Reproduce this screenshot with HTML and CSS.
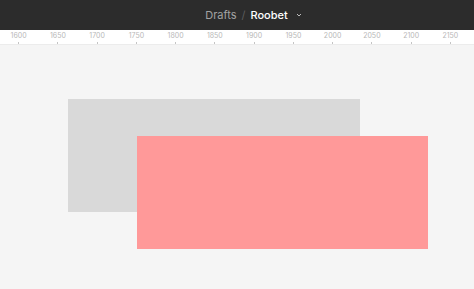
FILE: index.html
```html
<!DOCTYPE html>
<html lang="en">
<head>
    <meta charset="UTF-8">
    <meta name="viewport" content="width=device-width, initial-scale=1.0">
    <title>Roobet</title>
    <link rel="stylesheet" href="styles.css">
</head>
<body>
    <header class="topbar">
        <span class="crumb">Drafts</span>
        <span class="sep">/</span>
        <span class="file">Roobet</span>
        <svg class="chevron" width="8" height="8" viewBox="0 0 8 8">
            <path d="M2 3 L4 5 L6 3" fill="none" stroke="#bdbdbd" stroke-width="1"/>
        </svg>
    </header>

    <div class="ruler">
        <div class="mark"><span>1600</span><i></i></div>
        <div class="mark"><span>1650</span><i></i></div>
        <div class="mark"><span>1700</span><i></i></div>
        <div class="mark"><span>1750</span><i></i></div>
        <div class="mark"><span>1800</span><i></i></div>
        <div class="mark"><span>1850</span><i></i></div>
        <div class="mark"><span>1900</span><i></i></div>
        <div class="mark"><span>1950</span><i></i></div>
        <div class="mark"><span>2000</span><i></i></div>
        <div class="mark"><span>2050</span><i></i></div>
        <div class="mark"><span>2100</span><i></i></div>
        <div class="mark"><span>2150</span><i></i></div>
    </div>

    <main class="canvas">
        <div class="shape shape-gray"></div>
        <div class="shape shape-pink"></div>
    </main>
</body>
</html>
```

FILE: styles.css
```css
/* Basic reset */
* {
    margin: 0;
    padding: 0;
    box-sizing: border-box;
}

body {
    font-family: Inter, "Noto Sans", sans-serif;
    width: 474px;
    height: 289px;
    overflow: hidden;
    display: flex;
    flex-direction: column;
    background: #f5f5f5;
}

/* Dark title bar */
.topbar {
    height: 30px;
    background: #2c2c2c;
    display: flex;
    justify-content: center;
    align-items: center;
    gap: 5px;
    padding-left: 34px;
    font-size: 11px;
}

.crumb {
    color: #a3a3a3;
}

.sep {
    color: #5c5c5c;
}

.file {
    color: #ffffff;
    font-weight: 500;
}

.chevron {
    margin-left: 2px;
}

/* Ruler */
.ruler {
    height: 15px;
    background: #ffffff;
    border-bottom: 1px solid #ececec;
    display: flex;
    margin-left: -1px;
}

.mark {
    width: 39.25px;
    flex-shrink: 0;
    display: flex;
    flex-direction: column;
    align-items: center;
    padding-top: 2px;
}

.mark span {
    font-size: 7px;
    line-height: 8px;
    color: #b8b8b8;
}

.mark i {
    width: 1px;
    height: 3px;
    margin-top: 2px;
    background: #c4c4c4;
}

/* Canvas */
.canvas {
    flex: 1;
    position: relative;
    background: #f5f5f5;
}

.shape {
    position: absolute;
}

.shape-gray {
    left: 68px;
    top: 54px;
    width: 292px;
    height: 113px;
    background: #d9d9d9;
}

.shape-pink {
    left: 137px;
    top: 91px;
    width: 291px;
    height: 113px;
    background: #ff9999;
}
```
